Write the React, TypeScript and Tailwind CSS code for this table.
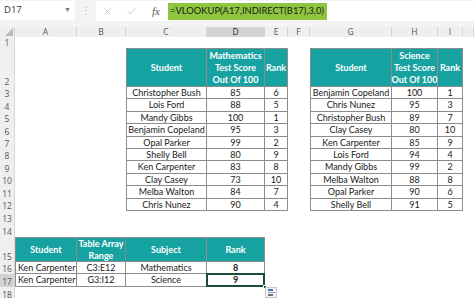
import React from "react";
import { X, Check } from "lucide-react";

type Col = "A" | "B" | "C" | "D" | "E" | "F" | "G" | "H" | "I" | "J";
const COLS: Col[] = ["A", "B", "C", "D", "E", "F", "G", "H", "I", "J"];
const colW: Record<Col, string> = {
  A: "w-[62px]",
  B: "w-[49px]",
  C: "w-[81px]",
  D: "w-[58px]",
  E: "w-[23px]",
  F: "w-[22px]",
  G: "w-[82px]",
  H: "w-[46px]",
  I: "w-[25px]",
  J: "flex-1",
};

type Cell = {
  t?: string;
  kind: "teal" | "data";
  first?: boolean;
  top?: boolean;
  left?: boolean;
  bold?: boolean;
  sel?: boolean;
};

type Row = {
  n: number;
  h: string;
  hl?: boolean;
  cells: Partial<Record<Col, Cell>>;
};

const t1: [string, string, string][] = [
  ["Christopher Bush", "85", "6"],
  ["Lois Ford", "88", "5"],
  ["Mandy Gibbs", "100", "1"],
  ["Benjamin Copeland", "95", "3"],
  ["Opal Parker", "99", "2"],
  ["Shelly Bell", "80", "9"],
  ["Ken Carpenter", "83", "8"],
  ["Clay Casey", "73", "10"],
  ["Melba Walton", "84", "7"],
  ["Chris Nunez", "90", "4"],
];
const t2: [string, string, string][] = [
  ["Benjamin Copeland", "100", "1"],
  ["Chris Nunez", "95", "3"],
  ["Christopher Bush", "89", "7"],
  ["Clay Casey", "80", "10"],
  ["Ken Carpenter", "85", "9"],
  ["Lois Ford", "94", "4"],
  ["Mandy Gibbs", "99", "2"],
  ["Melba Walton", "88", "8"],
  ["Opal Parker", "90", "6"],
  ["Shelly Bell", "91", "5"],
];
const dataH = ["h-[12px]", "h-[13px]", "h-[12px]", "h-[13px]", "h-[12px]", "h-[12px]", "h-[13px]", "h-[12px]", "h-[13px]", "h-[12px]"];

const rows: Row[] = [
  { n: 1, h: "h-[11px]", cells: {} },
  {
    n: 2,
    h: "h-[39px]",
    cells: {
      C: { kind: "teal", t: "Student", first: true, top: true },
      D: { kind: "teal", t: "Mathematics\nTest Score\nOut Of 100", top: true },
      E: { kind: "teal", t: "Rank", top: true },
      G: { kind: "teal", t: "Student", first: true, top: true },
      H: { kind: "teal", t: "Science\nTest Score\nOut Of 100", top: true },
      I: { kind: "teal", t: "Rank", top: true },
    },
  },
  ...t1.map((r, i) => ({
    n: i + 3,
    h: dataH[i],
    cells: {
      C: { kind: "data" as const, t: r[0], first: true },
      D: { kind: "data" as const, t: r[1] },
      E: { kind: "data" as const, t: r[2] },
      G: { kind: "data" as const, t: t2[i][0], first: true },
      H: { kind: "data" as const, t: t2[i][1] },
      I: { kind: "data" as const, t: t2[i][2] },
    },
  })),
  { n: 13, h: "h-[13px]", cells: {} },
  { n: 14, h: "h-[13px]", cells: {} },
  {
    n: 15,
    h: "h-[25px]",
    cells: {
      A: { kind: "teal", t: "Student", first: true, top: true },
      B: { kind: "teal", t: "Table Array\nRange", top: true },
      C: { kind: "teal", t: "Subject", top: true },
      D: { kind: "teal", t: "Rank", top: true },
    },
  },
  {
    n: 16,
    h: "h-[12px]",
    cells: {
      A: { kind: "data", t: "Ken Carpenter", first: true, left: true },
      B: { kind: "data", t: "C3:E12" },
      C: { kind: "data", t: "Mathematics" },
      D: { kind: "data", t: "8", bold: true },
    },
  },
  {
    n: 17,
    h: "h-[13px]",
    hl: true,
    cells: {
      A: { kind: "data", t: "Ken Carpenter", first: true, left: true },
      B: { kind: "data", t: "G3:I12" },
      C: { kind: "data", t: "Science" },
      D: { kind: "data", t: "9", bold: true, sel: true },
    },
  },
  { n: 18, h: "h-[13px]", cells: {} },
];

function CellView({ c, cell }: { c: Col; cell?: Cell }) {
  if (!cell) return <div className={`${colW[c]} h-full shrink-0 bg-white`} />;
  const cls: string[] = [
    colW[c],
    "h-full shrink-0 flex items-center whitespace-pre text-center leading-[12px] relative border-[#8c8c8c] border-r border-b",
  ];
  if (cell.first) cls.push("border-l");
  if (cell.top) cls.push("border-t");
  if (cell.kind === "teal") cls.push("bg-[#17a2a2] text-white font-bold justify-center");
  else cls.push("bg-white text-[#1a1a1a]");
  if (cell.kind === "data") cls.push(cell.left ? "justify-start pl-[2px]" : "justify-center");
  if (cell.bold) cls.push("font-bold");
  return (
    <div className={cls.join(" ")}>
      {cell.t}
      {cell.sel && (
        <>
          <div className="absolute -left-[1px] -top-[1px] -right-[1px] -bottom-[1px] border-2 border-[#1f4a33]" />
          <div className="absolute -right-[3px] -bottom-[3px] w-[4px] h-[4px] bg-[#1f4a33] border border-white" />
          <div className="absolute left-[58px] top-[13px] w-[12px] h-[11px] bg-[#f4f4f4] border border-[#c8c8c8] flex flex-col items-start justify-center pl-[2px] gap-[1px] z-10">
            <div className="w-[5px] h-[2px] bg-[#4472c4]" />
            <div className="w-[7px] h-[1px] bg-[#8aa0c8]" />
            <div className="w-[5px] h-[2px] bg-[#6f6f6f]" />
          </div>
        </>
      )}
    </div>
  );
}

export default function App() {
  return (
    <div className="w-[474px] h-[298px] overflow-hidden bg-white font-['Lato',sans-serif] text-[9px] select-none">
      {/* formula bar */}
      <div className="h-[27px] bg-[#f3f3f3] flex items-start pt-[1px]">
        <div className="w-[75px] h-[19px] bg-white flex items-center justify-between pl-[4px] pr-[4px] font-['Open_Sans',sans-serif] text-[9.5px] text-[#333]">
          <span>D17</span>
          <span className="text-[7px] text-[#777]">▼</span>
        </div>
        <div className="w-[21px] h-[19px] flex items-center justify-center text-[#b5b5b5] text-[10px]">⋮</div>
        <div className="flex-1 h-[20px] bg-white flex items-center">
          <div className="w-[22px] flex justify-center">
            <X size={11} strokeWidth={1.3} color="#a8a8a8" />
          </div>
          <div className="w-[26px] flex justify-center">
            <Check size={11} strokeWidth={1.3} color="#a8a8a8" />
          </div>
          <div className="w-[24px] flex justify-center font-['Liberation_Serif',serif] italic text-[11px] text-[#555]">
            fx
          </div>
          <div className="h-[17px] bg-[#8ec63f] flex items-center pl-[2px] pr-[3px] text-[#1a1a1a] text-[9.4px] whitespace-nowrap">
            =VLOOKUP(A17,INDIRECT(B17),3,0)
          </div>
        </div>
      </div>
      {/* column headers */}
      <div className="h-[10px] flex bg-[#efefef] text-[#555] font-['Open_Sans',sans-serif] text-[8.5px] leading-none">
        <div className="w-[15px] shrink-0 h-full relative border-r border-[#d6d6d6]">
          <div className="absolute right-[1px] bottom-[1px] w-0 h-0 border-l-[8px] border-l-transparent border-b-[8px] border-b-[#b9b9b9]" />
        </div>
        {COLS.map((c) => (
          <div
            key={c}
            className={`${colW[c]} shrink-0 h-full flex items-center justify-center border-r border-[#d6d6d6] ${
              c === "D" ? "bg-[#d3d3d3] text-[#222]" : ""
            }`}
          >
            {c === "J" ? "" : c}
          </div>
        ))}
      </div>
      {/* rows */}
      {rows.map((r) => (
        <div key={r.n} className={`${r.h} flex`}>
          <div
            className={`w-[15px] shrink-0 h-full flex items-end justify-center pb-[1px] font-['Open_Sans',sans-serif] text-[8.5px] leading-none text-[#555] border-r border-[#d6d6d6] ${
              r.hl ? "bg-[#d3d3d3]" : "bg-[#efefef]"
            }`}
          >
            {r.n}
          </div>
          {COLS.map((c) => (
            <CellView key={c} c={c} cell={r.cells[c]} />
          ))}
        </div>
      ))}
    </div>
  );
}
